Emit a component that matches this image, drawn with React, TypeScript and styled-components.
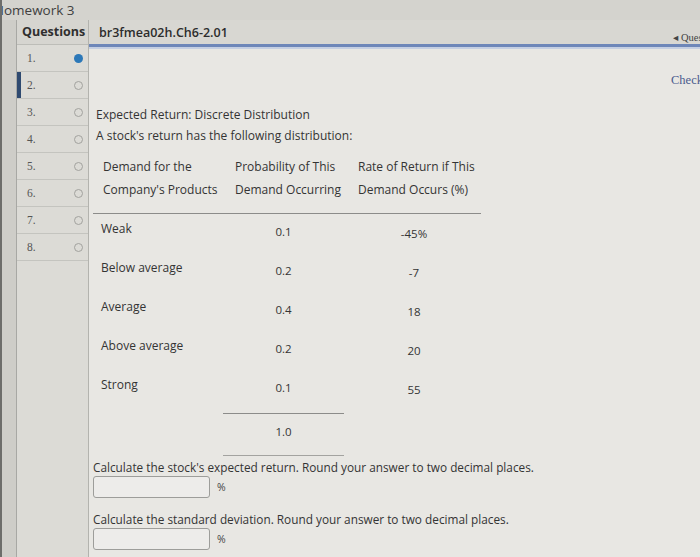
import * as React from "react";
import styled, { createGlobalStyle } from "styled-components";

const GlobalStyle = createGlobalStyle`
  html, body {
    margin: 0;
    padding: 0;
  }
  body {
    background: #d4d3ce;
    font-family: "Open Sans", "Liberation Sans", sans-serif;
  }
`;

const Page = styled.div`
  width: 700px;
  height: 557px;
  overflow: hidden;
  display: flex;
  flex-direction: column;
  box-sizing: border-box;
  background: #d4d3ce;
  border-left: 2px solid #6d6d6a;
  color: #363636;
`;

const TitleBar = styled.div`
  height: 20px;
  line-height: 20px;
  font-size: 13.5px;
  color: #3f3f3f;
  text-indent: -8px;
  white-space: nowrap;
`;

const Body = styled.div`
  flex: 1;
  display: flex;
  min-height: 0;
`;

const Gutter = styled.div`
  width: 14px;
  background: #cecdc8;
  border-right: 1px solid #a8a8a4;
`;

const Sidebar = styled.nav`
  width: 71px;
  display: flex;
  flex-direction: column;
  background: #dcdbd6;
  border-right: 1px solid #b3b3ae;
`;

const SideHead = styled.div`
  height: 24px;
  line-height: 24px;
  padding-left: 5px;
  font-size: 12.5px;
  font-weight: 700;
  color: #2f2f2f;
  background: #d6d5d0;
  border-bottom: 1px solid #bdbdb8;
`;

const QRow = styled.div<{ $active?: boolean }>`
  height: 26px;
  display: flex;
  align-items: center;
  justify-content: space-between;
  padding: 0 5px 0 10px;
  border-bottom: 1px solid #c4c4bf;
  box-shadow: ${(p) => (p.$active ? "inset 4px 0 0 #2f4a70" : "none")};
`;

const Num = styled.span`
  font-family: "Liberation Serif", "DejaVu Serif", serif;
  font-size: 11.5px;
  color: #555;
`;

const Dot = styled.span<{ $filled?: boolean }>`
  width: 9px;
  height: 9px;
  border-radius: 50%;
  box-sizing: border-box;
  background: ${(p) => (p.$filled ? "#2c78b8" : "transparent")};
  border: ${(p) => (p.$filled ? "none" : "1.5px solid #a2a29e")};
`;

const Main = styled.main`
  flex: 1;
  display: flex;
  flex-direction: column;
  background: #e8e7e3;
  min-width: 0;
`;

const MainHead = styled.div`
  height: 24px;
  display: flex;
  align-items: center;
  background: #d8d7d2;
  border-bottom: 3px solid #6e87b9;
  box-shadow: 0 2px 0 #c5cfe2;
`;

const TabLabel = styled.span`
  padding-left: 10px;
  font-size: 12.5px;
  font-weight: 600;
  color: #2c2c2c;
  white-space: nowrap;
`;

const Clip = styled.span<{ $w: number }>`
  margin-left: auto;
  width: ${(p) => p.$w}px;
  overflow: hidden;
  white-space: nowrap;
  font-family: "Liberation Serif", "DejaVu Serif", serif;
`;

const Pager = styled(Clip)`
  font-size: 10.5px;
  color: #444;
  align-self: flex-end;
  padding-bottom: 1px;
`;

const ToolRow = styled.div`
  display: flex;
  margin-top: 25px;
  height: 16px;
  line-height: 16px;
`;

const CheckLink = styled(Clip)`
  font-size: 12.5px;
  color: #4b5b8e;
`;

const Question = styled.section`
  display: flex;
  flex-direction: column;
  padding-left: 4px;
  font-size: 12px;
  color: #343434;
`;

const Title = styled.div`
  margin-top: 17px;
  padding-left: 3px;
  line-height: 20px;
`;

const Intro = styled.div`
  margin-top: 1px;
  padding-left: 3px;
  line-height: 20px;
`;

const Table = styled.div`
  width: 388px;
  margin-top: 9px;
`;

const HeadRow = styled.div`
  display: grid;
  grid-template-columns: 132px 123px auto;
  padding: 0 0 12px 10px;
  line-height: 23px;
  border-bottom: 1px solid #8c8c8a;
`;

const DataRow = styled.div`
  display: grid;
  grid-template-columns: 130px 121px 140px;
  height: 39px;
  padding-top: 5px;
  box-sizing: border-box;
  line-height: 20px;
`;

const Label = styled.span`
  padding-left: 8px;
`;

const Value = styled.span<{ $drop: number }>`
  padding-top: ${(p) => p.$drop}px;
  text-align: center;
  font-size: 11.5px;
`;

const SumCell = styled.div`
  margin: 4px 0 0 130px;
  width: 121px;
  padding: 8px 0 13px;
  line-height: 20px;
  text-align: center;
  font-size: 11.5px;
  border-top: 1px solid #8c8c8a;
  border-bottom: 1px solid #a3a3a0;
`;

const Prompt = styled.div<{ $gap: number }>`
  margin-top: ${(p) => p.$gap}px;
  line-height: 18px;
  font-size: 11.8px;
`;

const AnswerRow = styled.div`
  display: flex;
  align-items: center;
  gap: 7px;
`;

const AnswerBox = styled.input`
  width: 117px;
  height: 22px;
  box-sizing: border-box;
  margin: 0;
  border: 1px solid #9d9d9a;
  border-radius: 3px;
  background: #edecea;
`;

const Unit = styled.span`
  font-size: 10.5px;
  color: #444;
`;

const rows: [string, string, string][] = [
  ["Weak", "0.1", "-45%"],
  ["Below average", "0.2", "-7"],
  ["Average", "0.4", "18"],
  ["Above average", "0.2", "20"],
  ["Strong", "0.1", "55"],
];

export default function App() {
  return (
    <>
      <GlobalStyle />
      <Page>
        <TitleBar>Homework 3</TitleBar>
        <Body>
          <Gutter />
          <Sidebar>
            <SideHead>Questions</SideHead>
            {Array.from({ length: 8 }, (_, i) => (
              <QRow key={i} $active={i === 1}>
                <Num>{i + 1}.</Num>
                <Dot $filled={i === 0} />
              </QRow>
            ))}
          </Sidebar>
          <Main>
            <MainHead>
              <TabLabel>br3fmea02h.Ch6-2.01</TabLabel>
              <Pager $w={27}>◂ Question 2 of 8 ▸</Pager>
            </MainHead>
            <ToolRow>
              <CheckLink $w={29}>Check Answer</CheckLink>
            </ToolRow>
            <Question>
              <Title>Expected Return: Discrete Distribution</Title>
              <Intro>A stock's return has the following distribution:</Intro>
              <Table>
                <HeadRow>
                  <span>Demand for the</span>
                  <span>Probability of This</span>
                  <span>Rate of Return if This</span>
                  <span>Company's Products</span>
                  <span>Demand Occurring</span>
                  <span>Demand Occurs (%)</span>
                </HeadRow>
                {rows.map(([label, prob, rate]) => (
                  <DataRow key={label}>
                    <Label>{label}</Label>
                    <Value $drop={3}>{prob}</Value>
                    <Value $drop={5}>{rate}</Value>
                  </DataRow>
                ))}
              </Table>
              <SumCell>1.0</SumCell>
              <Prompt $gap={2}>
                Calculate the stock's expected return. Round your answer to two decimal places.
              </Prompt>
              <AnswerRow>
                <AnswerBox type="text" />
                <Unit>%</Unit>
              </AnswerRow>
              <Prompt $gap={12}>
                Calculate the standard deviation. Round your answer to two decimal places.
              </Prompt>
              <AnswerRow>
                <AnswerBox type="text" />
                <Unit>%</Unit>
              </AnswerRow>
            </Question>
          </Main>
        </Body>
      </Page>
    </>
  );
}
